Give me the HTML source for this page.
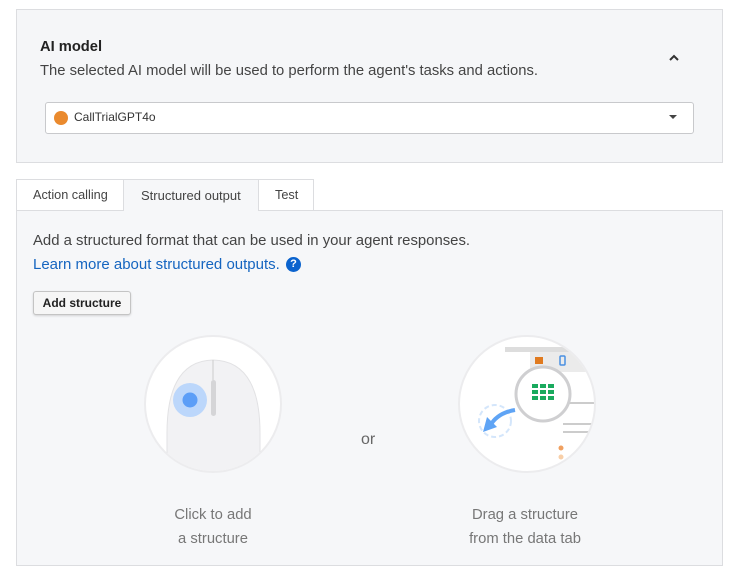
<!DOCTYPE html>
<html><head><style>
body{margin:0;background:#fff;font-family:"Liberation Sans",sans-serif;color:#333;width:735px;height:583px;position:relative;overflow:hidden}
.p{position:absolute;box-sizing:border-box;white-space:nowrap}
</style></head><body>
<div class="p" style="left:16px;top:9px;width:707px;height:154px;background:#f5f6f8;border:1px solid #dcdde0"></div>
<div class="p" style="left:40px;top:39px;font-size:14.7px;font-weight:bold;color:#222">AI model</div>
<div class="p" style="left:40px;top:63px;font-size:14.8px;color:#444">The selected AI model will be used to perform the agent's tasks and actions.</div>
<svg class="p" style="left:668px;top:53px" width="12" height="10"><path d="M2 7 L6 3 L10 7" stroke="#333" stroke-width="2" fill="none"/></svg>
<div class="p" style="left:45px;top:102px;width:649px;height:32px;background:#fff;border:1px solid #c8c9cc;border-radius:3px"></div>
<div class="p" style="left:54px;top:111px;width:14px;height:14px;border-radius:50%;background:#ea8a2e"></div>
<div class="p" style="left:74px;top:110px;font-size:12px;color:#333">CallTrialGPT4o</div>
<svg class="p" style="left:668px;top:114px" width="10" height="6"><path d="M1 1 L9 1 L5 5Z" fill="#444"/></svg>

<div class="p" style="left:16px;top:210px;width:707px;height:356px;background:#f6f7f9;border:1px solid #dcdde0"></div>
<div class="p" style="left:16px;top:179px;width:108px;height:32px;background:#fff;border:1px solid #dcdde0;font-size:12.7px;color:#444;padding:8px 0 0 16px">Action calling</div>
<div class="p" style="left:123px;top:179px;width:136px;height:32px;background:#f6f7f9;border:1px solid #dcdde0;border-bottom:none;font-size:13px;color:#444;padding:8px 0 0 17px">Structured output</div>
<div class="p" style="left:258px;top:179px;width:56px;height:32px;background:#fff;border:1px solid #dcdde0;font-size:12.7px;color:#444;padding:8px 0 0 16px">Test</div>
<div class="p" style="left:33px;top:233px;font-size:14.9px;color:#444">Add a structured format that can be used in your agent responses.</div>
<div class="p" style="left:33px;top:256px;font-size:15px;color:#1565c0">Learn more about structured outputs.</div>
<div class="p" style="left:286px;top:257px;width:15px;height:15px;border-radius:50%;background:#0b63ce;color:#fff;font-size:11px;font-weight:bold;text-align:center;line-height:15px">?</div>
<div class="p" style="left:33px;top:291px;width:98px;height:24px;background:#f6f6f6;border:1px solid #c4c4c4;border-radius:3px;box-shadow:0 1px 2px rgba(0,0,0,.15);font-size:12px;font-weight:bold;color:#222;text-align:center;line-height:22px">Add structure</div>

<svg class="p" style="left:140px;top:333px" width="150" height="145">
<defs><clipPath id="c1"><circle cx="73" cy="71" r="67"/></clipPath></defs>
<circle cx="73" cy="71" r="68" fill="#fff" stroke="#ececee" stroke-width="2"/>
<g clip-path="url(#c1)">
<path d="M27 145 L27 100 Q27 28 73 27 Q120 28 120 100 L120 145" fill="#f2f2f4" stroke="#e2e2e4"/>
<line x1="73" y1="27" x2="73" y2="47" stroke="#ccc"/>
<rect x="71" y="47" width="5" height="36" rx="2.5" fill="#d5d5d7"/>
</g>
<circle cx="50" cy="67" r="17" fill="#bcd7fb"/>
<circle cx="50" cy="67" r="7.5" fill="#5c9ef7"/>
</svg>
<div class="p" style="left:361px;top:431px;font-size:16px;color:#666">or</div>
<svg class="p" style="left:455px;top:333px" width="145" height="145">
<defs><clipPath id="c2"><circle cx="72" cy="71" r="67"/></clipPath></defs>
<circle cx="72" cy="71" r="68" fill="#fff" stroke="#ececee" stroke-width="2"/>
<g clip-path="url(#c2)">
<rect x="50" y="14" width="95" height="5" fill="#ddd"/>
<rect x="75" y="19" width="70" height="20" fill="#ebebeb"/>
<rect x="80" y="24" width="8" height="7" fill="#e07a1f"/>
<rect x="105" y="23" width="5" height="9" rx="1" fill="none" stroke="#4a90e2" stroke-width="1.5"/>
<line x1="108" y1="70" x2="140" y2="70" stroke="#ccc" stroke-width="2"/>
<line x1="108" y1="91" x2="140" y2="91" stroke="#ccc" stroke-width="2"/>
<line x1="108" y1="99" x2="140" y2="99" stroke="#ccc" stroke-width="2"/>
<circle cx="106" cy="115" r="2.5" fill="#f0a060"/><circle cx="106" cy="124" r="2.5" fill="#f8cfa8"/>
</g>
<circle cx="88" cy="61" r="27" fill="#fff" stroke="#cfcfd1" stroke-width="3"/>
<g fill="#1aaa5e"><rect x="77" y="51" width="6" height="4"/><rect x="85" y="51" width="6" height="4"/><rect x="93" y="51" width="6" height="4"/><rect x="77" y="57" width="6" height="4"/><rect x="85" y="57" width="6" height="4"/><rect x="93" y="57" width="6" height="4"/><rect x="77" y="63" width="6" height="4"/><rect x="85" y="63" width="6" height="4"/><rect x="93" y="63" width="6" height="4"/></g>
<circle cx="40" cy="88" r="16" fill="none" stroke="#d4e6fb" stroke-width="2" stroke-dasharray="5 3"/>
<path d="M60 77 Q42 80 35 93" stroke="#5fa4f5" stroke-width="4" fill="none"/>
<path d="M28 99 L32 84 L42 94Z" fill="#5fa4f5"/>
</svg>
<div class="p" style="left:138px;top:503px;width:150px;text-align:center;font-size:14.8px;line-height:24px;color:#777">Click to add<br>a structure</div>
<div class="p" style="left:440px;top:503px;width:170px;text-align:center;font-size:14.8px;line-height:24px;color:#777">Drag a structure<br>from the data tab</div>
</body></html>
